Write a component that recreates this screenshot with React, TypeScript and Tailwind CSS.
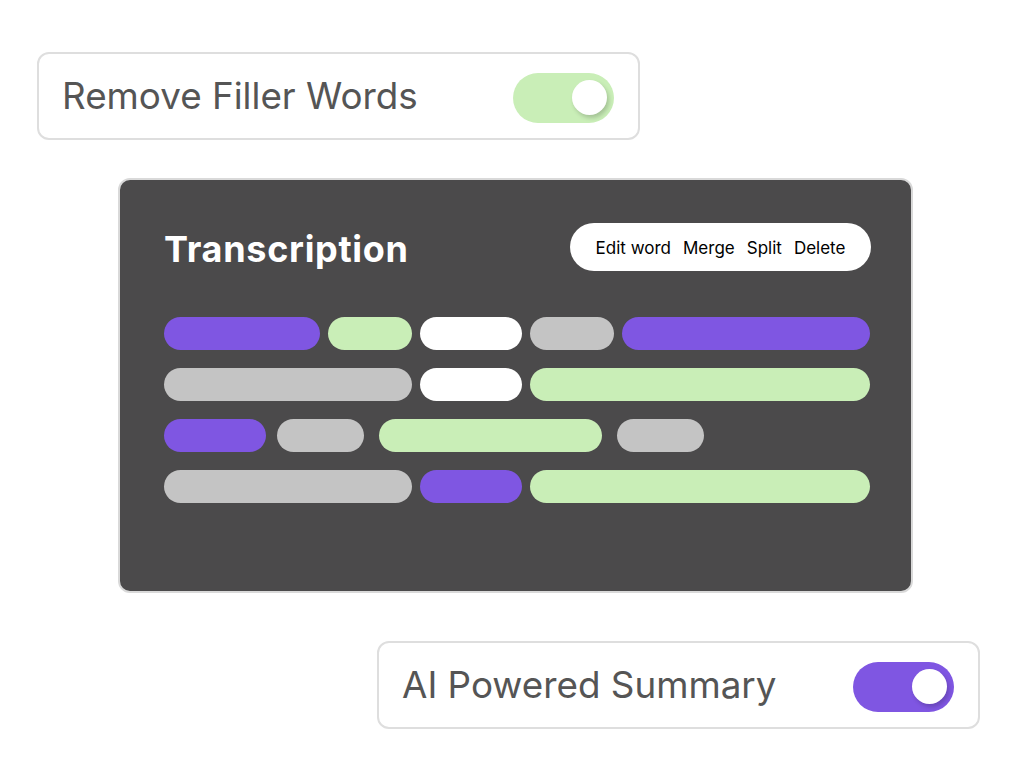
const font = { fontFamily: "Inter, 'Noto Sans', sans-serif" };

type Bar = { w: number; c: string; ml?: number };

const purple = "bg-[#7f56e2]";
const green = "bg-[#c9eeb7]";
const gray = "bg-[#c4c4c4]";
const white = "bg-white";

const rows: Bar[][] = [
  [
    { w: 156, c: purple },
    { w: 84, c: green, ml: 8 },
    { w: 102, c: white, ml: 8 },
    { w: 84, c: gray, ml: 8 },
    { w: 248, c: purple, ml: 8 },
  ],
  [
    { w: 248, c: gray },
    { w: 102, c: white, ml: 8 },
    { w: 340, c: green, ml: 8 },
  ],
  [
    { w: 102, c: purple },
    { w: 87, c: gray, ml: 11 },
    { w: 223, c: green, ml: 15 },
    { w: 87, c: gray, ml: 15 },
  ],
  [
    { w: 248, c: gray },
    { w: 102, c: purple, ml: 8 },
    { w: 340, c: green, ml: 8 },
  ],
];

function Toggle({ on }: { on: "green" | "purple" }) {
  return (
    <div
      className={`flex items-center justify-end w-[101px] h-[50px] mt-[3px] rounded-full pr-[7px] ${
        on === "green" ? "bg-[#c9eeb7]" : "bg-[#7f56e2]"
      }`}
    >
      <div className="w-[35px] h-[35px] rounded-full bg-white shadow-[2px_3px_4px_rgba(0,0,0,0.18)]" />
    </div>
  );
}

function SettingCard({ label, on, className }: { label: string; on: "green" | "purple"; className: string }) {
  return (
    <div
      className={`flex items-center justify-between h-[88px] w-[603px] rounded-[12px] border-2 border-[#dedede] bg-white pl-[23px] pr-[24px] ${className}`}
    >
      <span className="text-[36.8px] text-[#555555]">{label}</span>
      <Toggle on={on} />
    </div>
  );
}

export default function App() {
  return (
    <div className="w-[1024px] h-[768px] bg-white flex flex-col pt-[52px]" style={font}>
      <SettingCard label="Remove Filler Words" on="green" className="ml-[37px]" />

      <div className="ml-[118px] mt-[38px] w-[795px] h-[415px] rounded-[12px] border-2 border-[#d9d9d9] bg-[#4b4a4b] pl-[44px] pr-[40px] pt-[43px]">
        <div className="flex items-center justify-between h-[48px]">
          <h1 className="text-[36px] leading-none font-bold text-white tracking-[0.7px] mt-[4px]">Transcription</h1>
          <div className="flex items-center justify-center gap-[12px] w-[301px] h-[48px] pt-[3px] rounded-full bg-white text-[17px] text-black">
            <span>Edit word</span>
            <span>Merge</span>
            <span>Split</span>
            <span>Delete</span>
          </div>
        </div>
        <div className="flex flex-col gap-[18px] mt-[46px]">
          {rows.map((row, i) => (
            <div key={i} className="flex">
              {row.map((b, j) => (
                <div
                  key={j}
                  className={`h-[33px] rounded-full ${b.c}`}
                  style={{ width: b.w, marginLeft: b.ml ?? 0 }}
                />
              ))}
            </div>
          ))}
        </div>
      </div>

      <SettingCard label="AI Powered Summary" on="purple" className="ml-[377px] mt-[48px]" />
    </div>
  );
}
